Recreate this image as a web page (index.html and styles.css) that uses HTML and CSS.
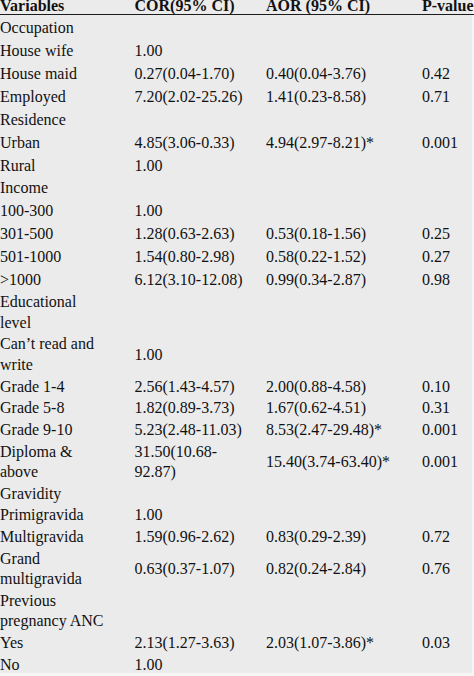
FILE: index.html
```html
<!DOCTYPE html>
<html lang="en">
<head>
<meta charset="utf-8">
<title>Table</title>
<link rel="stylesheet" href="styles.css">
</head>
<body>
<div class="sheet">
  <div class="grid head">
    <div class="cell">Variables</div>
    <div class="cell">COR(95% CI)</div>
    <div class="cell">AOR (95% CI)</div>
    <div class="cell">P-value</div>
  </div>
  <div class="grid body upper">
    <div class="row"><div class="cell">Occupation</div><div class="cell"></div><div class="cell"></div><div class="cell"></div></div>
    <div class="row"><div class="cell">House wife</div><div class="cell">1.00</div><div class="cell"></div><div class="cell"></div></div>
    <div class="row"><div class="cell">House maid</div><div class="cell">0.27(0.04-1.70)</div><div class="cell">0.40(0.04-3.76)</div><div class="cell">0.42</div></div>
    <div class="row"><div class="cell">Employed</div><div class="cell">7.20(2.02-25.26)</div><div class="cell">1.41(0.23-8.58)</div><div class="cell">0.71</div></div>
    <div class="row"><div class="cell">Residence</div><div class="cell"></div><div class="cell"></div><div class="cell"></div></div>
    <div class="row"><div class="cell">Urban</div><div class="cell">4.85(3.06-0.33)</div><div class="cell">4.94(2.97-8.21)*</div><div class="cell">0.001</div></div>
    <div class="row"><div class="cell">Rural</div><div class="cell">1.00</div><div class="cell"></div><div class="cell"></div></div>
    <div class="row"><div class="cell">Income</div><div class="cell"></div><div class="cell"></div><div class="cell"></div></div>
    <div class="row"><div class="cell">100-300</div><div class="cell">1.00</div><div class="cell"></div><div class="cell"></div></div>
    <div class="row"><div class="cell">301-500</div><div class="cell">1.28(0.63-2.63)</div><div class="cell">0.53(0.18-1.56)</div><div class="cell">0.25</div></div>
    <div class="row"><div class="cell">501-1000</div><div class="cell">1.54(0.80-2.98)</div><div class="cell">0.58(0.22-1.52)</div><div class="cell">0.27</div></div>
    <div class="row"><div class="cell">&gt;1000</div><div class="cell">6.12(3.10-12.08)</div><div class="cell">0.99(0.34-2.87)</div><div class="cell">0.98</div></div>
  </div>
  <div class="grid body lower">
    <div class="row"><div class="cell">Educational level</div><div class="cell"></div><div class="cell"></div><div class="cell"></div></div>
    <div class="row"><div class="cell">Can’t read and write</div><div class="cell">1.00</div><div class="cell"></div><div class="cell"></div></div>
    <div class="row"><div class="cell">Grade 1-4</div><div class="cell">2.56(1.43-4.57)</div><div class="cell">2.00(0.88-4.58)</div><div class="cell">0.10</div></div>
    <div class="row"><div class="cell">Grade 5-8</div><div class="cell">1.82(0.89-3.73)</div><div class="cell">1.67(0.62-4.51)</div><div class="cell">0.31</div></div>
    <div class="row"><div class="cell">Grade 9-10</div><div class="cell">5.23(2.48-11.03)</div><div class="cell">8.53(2.47-29.48)*</div><div class="cell">0.001</div></div>
    <div class="row"><div class="cell">Diploma &amp; above</div><div class="cell">31.50(10.68-<wbr>92.87)</div><div class="cell">15.40(3.74-63.40)*</div><div class="cell">0.001</div></div>
    <div class="row"><div class="cell">Gravidity</div><div class="cell"></div><div class="cell"></div><div class="cell"></div></div>
    <div class="row"><div class="cell">Primigravida</div><div class="cell">1.00</div><div class="cell"></div><div class="cell"></div></div>
    <div class="row"><div class="cell">Multigravida</div><div class="cell">1.59(0.96-2.62)</div><div class="cell">0.83(0.29-2.39)</div><div class="cell">0.72</div></div>
    <div class="row"><div class="cell">Grand multigravida</div><div class="cell">0.63(0.37-1.07)</div><div class="cell">0.82(0.24-2.84)</div><div class="cell">0.76</div></div>
    <div class="row"><div class="cell">Previous pregnancy ANC</div><div class="cell"></div><div class="cell"></div><div class="cell"></div></div>
    <div class="row"><div class="cell">Yes</div><div class="cell">2.13(1.27-3.63)</div><div class="cell">2.03(1.07-3.86)*</div><div class="cell">0.03</div></div>
    <div class="row"><div class="cell">No</div><div class="cell">1.00</div><div class="cell"></div><div class="cell"></div></div>
  </div>
</div>
</body>
</html>
```

FILE: styles.css
```css
html, body {
  margin: 0;
  padding: 0;
  background: #f6f6f6;
}

.sheet {
  display: flow-root;
  width: 472px;
  height: 673px;
  background: #ebebeb;
  color: #111111;
  font-family: "Liberation Serif", "Times New Roman", serif;
  font-size: 16px;
}

.grid {
  display: grid;
  grid-template-columns: 134.5px 131.5px 156px 52px;
  width: 474px;
}

.head {
  margin-top: -2.6px;
  font-weight: bold;
  line-height: 17px;
  border-bottom: 1.5px solid #1c1c1c;
  white-space: nowrap;
}

.body {
  line-height: 20.5px;
  align-items: center;
}

.upper {
  padding-top: 1.74px;
}

.row {
  display: contents;
}

.cell {
  min-width: 0;
}

.upper .cell {
  padding: 1.2px 0;
}

.lower .cell {
  padding: 0.59px 0;
}

.head .cell:nth-child(1),
.row .cell:nth-child(1) {
  padding-right: 26.5px;
}

.head .cell:nth-child(2),
.row .cell:nth-child(2) {
  padding-right: 15.5px;
}
```
